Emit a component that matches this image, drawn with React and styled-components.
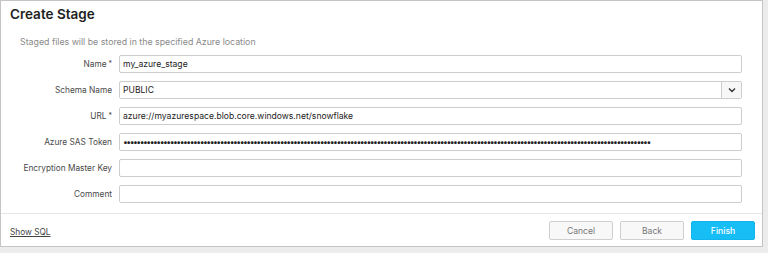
import styled, { createGlobalStyle } from "styled-components";

const Global = createGlobalStyle`
  html, body { margin: 0; padding: 0; background: #ececec; }
  body { font-family: Inter, "Noto Sans", "Liberation Sans", sans-serif; }
`;

const Dialog = styled.div`
  width: 763px;
  height: 247px;
  box-sizing: border-box;
  background: #fff;
  border: 1px solid #c4c4c4;
  display: flex;
  flex-direction: column;
`;

const Title = styled.h1`
  margin: 0;
  padding: 5px 0 0 9px;
  font-size: 13.5px;
  font-weight: 600;
  color: #1e1e1e;
  height: 21px;
`;

const Subtitle = styled.p`
  margin: 0;
  padding: 9px 0 0 19px;
  font-size: 8.8px;
  color: #8a8a8a;
  height: 19px;
`;

const Form = styled.div`
  display: flex;
  flex-direction: column;
  gap: 8px;
  padding: 0 20px 0 0;
`;

const Row = styled.div`
  display: grid;
  grid-template-columns: 118px 1fr;
  align-items: center;
`;

const Label = styled.label`
  text-align: right;
  padding-right: 7px;
  font-size: 8.3px;
  color: #4a4a4a;
`;

const Req = styled.span`
  font-size: 7px;
  margin-left: 2px;
  vertical-align: 1px;
`;

const Input = styled.input`
  height: 18px;
  box-sizing: border-box;
  border: 1px solid #cdcdcd;
  border-radius: 2px;
  padding: 0 3px;
  font-family: inherit;
  font-size: 8.6px;
  color: #222;
  background: #fff;
  outline: none;
  width: 100%;
  letter-spacing: ${(p) => (p.type === "password" ? "-1.5px" : "normal")};
`;

const Select = styled.div`
  height: 18px;
  box-sizing: border-box;
  border: 1px solid #cdcdcd;
  border-radius: 2px;
  display: flex;
  align-items: center;
  font-size: 8.6px;
  color: #222;
`;

const SelectText = styled.span`
  flex: 1;
  padding-left: 3px;
`;

const Caret = styled.span`
  width: 19px;
  height: 100%;
  border-left: 1px solid #cdcdcd;
  background: #f7f7f7;
  display: flex;
  align-items: center;
  justify-content: center;
`;

const Divider = styled.div`
  margin-top: 10px;
  border-top: 1px solid #e6e6e6;
`;

const Footer = styled.div`
  flex: 1;
  display: flex;
  align-items: center;
  padding: 1px 7px 0 9px;
`;

const Link = styled.a`
  font-size: 8.3px;
  color: #444;
  text-decoration: underline;
  margin-top: 2px;
`;

const Buttons = styled.div`
  margin-left: auto;
  display: flex;
  gap: 7px;
`;

const Button = styled.button`
  width: 64px;
  height: 19px;
  box-sizing: border-box;
  border-radius: 2px;
  font-family: inherit;
  font-size: 8.6px;
  border: 1px solid ${(p) => (p.$primary ? "#12b4f0" : "#cfcfcf")};
  background: ${(p) => (p.$primary ? "#17bdf5" : "#f8f8f8")};
  color: ${(p) => (p.$primary ? "#fff" : "#777")};
  font-weight: ${(p) => (p.$primary ? 500 : 400)};
`;

const fields = [
  { label: "Name", req: true, value: "my_azure_stage" },
  { label: "Schema Name", select: true, value: "PUBLIC" },
  { label: "URL", req: true, value: "azure://myazurespace.blob.core.windows.net/snowflake" },
  { label: "Azure SAS Token", type: "password", value: "x".repeat(158) },
  { label: "Encryption Master Key", value: "" },
  { label: "Comment", value: "" },
];

export default function App() {
  return (
    <>
      <Global />
      <Dialog>
        <Title>Create Stage</Title>
        <Subtitle>Staged files will be stored in the specified Azure location</Subtitle>
        <Form>
          {fields.map((f) => (
            <Row key={f.label}>
              <Label>
                {f.label}
                {f.req && <Req>*</Req>}
              </Label>
              {f.select ? (
                <Select>
                  <SelectText>{f.value}</SelectText>
                  <Caret>
                    <svg width="8" height="6" viewBox="0 0 8 6">
                      <path d="M1 1.5 L4 4.5 L7 1.5" fill="none" stroke="#333" strokeWidth="1.4" />
                    </svg>
                  </Caret>
                </Select>
              ) : (
                <Input type={f.type || "text"} defaultValue={f.value} readOnly />
              )}
            </Row>
          ))}
        </Form>
        <Divider />
        <Footer>
          <Link>Show SQL</Link>
          <Buttons>
            <Button>Cancel</Button>
            <Button>Back</Button>
            <Button $primary>Finish</Button>
          </Buttons>
        </Footer>
      </Dialog>
    </>
  );
}
